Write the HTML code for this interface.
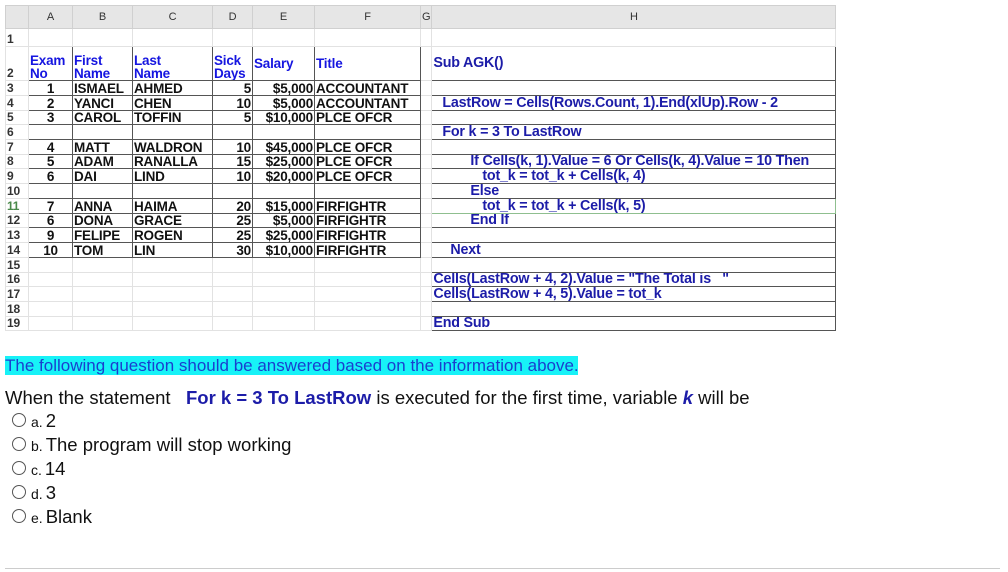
<!DOCTYPE html>
<html><head><meta charset="utf-8"><style>
body{margin:0;width:1008px;height:572px;background:#fff;position:relative;overflow:hidden;font-family:"Liberation Sans",Arial,sans-serif}
table.s{position:absolute;left:5px;top:5px;border-collapse:collapse;table-layout:fixed;font-family:"Liberation Sans",Arial,sans-serif;font-weight:bold;font-size:13.5px;color:#111;letter-spacing:-0.2px}
table.s td{border:1px solid #e2e2e2;padding:0 1px;white-space:nowrap;overflow:hidden;line-height:13px;vertical-align:bottom}
table.s tr.h td{background:#e6e6e6;color:#333;text-align:center;font-weight:normal;font-size:11px;vertical-align:middle;border-color:#d0d0d0}
td.n{color:#333;font-weight:bold!important;font-size:12px;padding-left:1px!important}
td.d{border:1px solid #555!important}
td.c{border:1px solid #555!important;color:#1c1ca8;font-size:14.3px;letter-spacing:-0.2px}
.b{color:#1515e0}
.r{text-align:right}.m{text-align:center}
.q{position:absolute;left:5px;font-size:18.5px;color:#111;white-space:nowrap}
.o{position:absolute;left:12px;font-size:18.5px;color:#111}
.o i{display:inline-block;width:12px;height:12px;border:1px solid #555;border-radius:50%;vertical-align:0;margin-right:5px}
.o small{font-size:14px;margin-right:3px}
</style></head><body>
<table class="s">
<colgroup><col style="width:23px"><col style="width:44px"><col style="width:60px"><col style="width:80px"><col style="width:40px"><col style="width:62px"><col style="width:106px"><col style="width:10px"><col style="width:404px"></colgroup>
<tr class="h" style="height:23px"><td style="background:#e6e6e6"></td><td>A</td><td>B</td><td>C</td><td>D</td><td>E</td><td>F</td><td>G</td><td>H</td></tr>
<tr style="height:18px"><td class="n">1</td><td></td><td></td><td></td><td></td><td></td><td></td><td></td><td></td></tr>
<tr style="height:34px"><td class="n">2</td><td class="d b">Exam<br>No</td><td class="d b">First<br>Name</td><td class="d b">Last<br>Name</td><td class="d b">Sick<br>Days</td><td class="d b" style="vertical-align:middle">Salary</td><td class="d b" style="vertical-align:middle">Title</td><td></td><td class="c" style="vertical-align:middle">Sub AGK()</td></tr>
<tr style="height:15px"><td class="n">3</td><td class="d m">1</td><td class="d">ISMAEL</td><td class="d">AHMED</td><td class="d r">5</td><td class="d r">$5,000</td><td class="d">ACCOUNTANT</td><td></td><td class="c"></td></tr>
<tr style="height:15px"><td class="n">4</td><td class="d m">2</td><td class="d">YANCI</td><td class="d">CHEN</td><td class="d r">10</td><td class="d r">$5,000</td><td class="d">ACCOUNTANT</td><td></td><td class="c" style="padding-left:10px">LastRow = Cells(Rows.Count, 1).End(xlUp).Row - 2</td></tr>
<tr style="height:14px"><td class="n">5</td><td class="d m">3</td><td class="d">CAROL</td><td class="d">TOFFIN</td><td class="d r">5</td><td class="d r">$10,000</td><td class="d">PLCE OFCR</td><td></td><td class="c"></td></tr>
<tr style="height:15px"><td class="n">6</td><td class="d"></td><td class="d"></td><td class="d"></td><td class="d"></td><td class="d"></td><td class="d"></td><td></td><td class="c" style="padding-left:10px">For k = 3 To LastRow</td></tr>
<tr style="height:15px"><td class="n">7</td><td class="d m">4</td><td class="d">MATT</td><td class="d">WALDRON</td><td class="d r">10</td><td class="d r">$45,000</td><td class="d">PLCE OFCR</td><td></td><td class="c"></td></tr>
<tr style="height:14px"><td class="n">8</td><td class="d m">5</td><td class="d">ADAM</td><td class="d">RANALLA</td><td class="d r">15</td><td class="d r">$25,000</td><td class="d">PLCE OFCR</td><td></td><td class="c" style="padding-left:38px">If Cells(k, 1).Value = 6 Or Cells(k, 4).Value = 10 Then</td></tr>
<tr style="height:15px"><td class="n">9</td><td class="d m">6</td><td class="d">DAI</td><td class="d">LIND</td><td class="d r">10</td><td class="d r">$20,000</td><td class="d">PLCE OFCR</td><td></td><td class="c" style="padding-left:50px">tot_k = tot_k + Cells(k, 4)</td></tr>
<tr style="height:15px"><td class="n">10</td><td class="d"></td><td class="d"></td><td class="d"></td><td class="d"></td><td class="d"></td><td class="d"></td><td></td><td class="c" style="padding-left:38px">Else</td></tr>
<tr style="height:15px"><td class="n" style="color:#4a8a4a">11</td><td class="d m">7</td><td class="d">ANNA</td><td class="d">HAIMA</td><td class="d r">20</td><td class="d r">$15,000</td><td class="d">FIRFIGHTR</td><td></td><td class="c" style="padding-left:50px;border-color:#8fbf8f!important">tot_k = tot_k + Cells(k, 5)</td></tr>
<tr style="height:14px"><td class="n">12</td><td class="d m">6</td><td class="d">DONA</td><td class="d">GRACE</td><td class="d r">25</td><td class="d r">$5,000</td><td class="d">FIRFIGHTR</td><td></td><td class="c" style="padding-left:38px">End If</td></tr>
<tr style="height:15px"><td class="n">13</td><td class="d m">9</td><td class="d">FELIPE</td><td class="d">ROGEN</td><td class="d r">25</td><td class="d r">$25,000</td><td class="d">FIRFIGHTR</td><td></td><td class="c"></td></tr>
<tr style="height:15px"><td class="n">14</td><td class="d m">10</td><td class="d">TOM</td><td class="d">LIN</td><td class="d r">30</td><td class="d r">$10,000</td><td class="d">FIRFIGHTR</td><td></td><td class="c" style="padding-left:18px">Next</td></tr>
<tr style="height:15px"><td class="n">15</td><td></td><td></td><td></td><td></td><td></td><td></td><td></td><td class="c"></td></tr>
<tr style="height:14px"><td class="n">16</td><td></td><td></td><td></td><td></td><td></td><td></td><td></td><td class="c">Cells(LastRow + 4, 2).Value = "The Total is &nbsp;&nbsp;"</td></tr>
<tr style="height:15px"><td class="n">17</td><td></td><td></td><td></td><td></td><td></td><td></td><td></td><td class="c">Cells(LastRow + 4, 5).Value = tot_k</td></tr>
<tr style="height:15px"><td class="n">18</td><td></td><td></td><td></td><td></td><td></td><td></td><td></td><td class="c"></td></tr>
<tr style="height:14px"><td class="n">19</td><td></td><td></td><td></td><td></td><td></td><td></td><td></td><td class="c">End Sub</td></tr>
</table>
<div class="q" style="top:356px;height:19px;line-height:19px;width:573px;background:#17f2f7;color:#1a3fcf;font-size:17px">The following question should be answered based on the information above.</div>
<div class="q" style="top:388px;line-height:20px">When the statement &nbsp;&nbsp;<b style="color:#1c1ca8">For k = 3 To LastRow</b> is executed for the first time, variable <b style="color:#1c1ca8"><i>k</i></b> will be</div>
<div class="o" style="top:410px"><i></i><small>a.</small>2</div>
<div class="o" style="top:434px"><i></i><small>b.</small>The program will stop working</div>
<div class="o" style="top:458px"><i></i><small>c.</small>14</div>
<div class="o" style="top:482px"><i></i><small>d.</small>3</div>
<div class="o" style="top:506px"><i></i><small>e.</small>Blank</div>
<div style="position:absolute;left:5px;top:568px;width:995px;height:1px;background:#ccc"></div>
</body></html>
